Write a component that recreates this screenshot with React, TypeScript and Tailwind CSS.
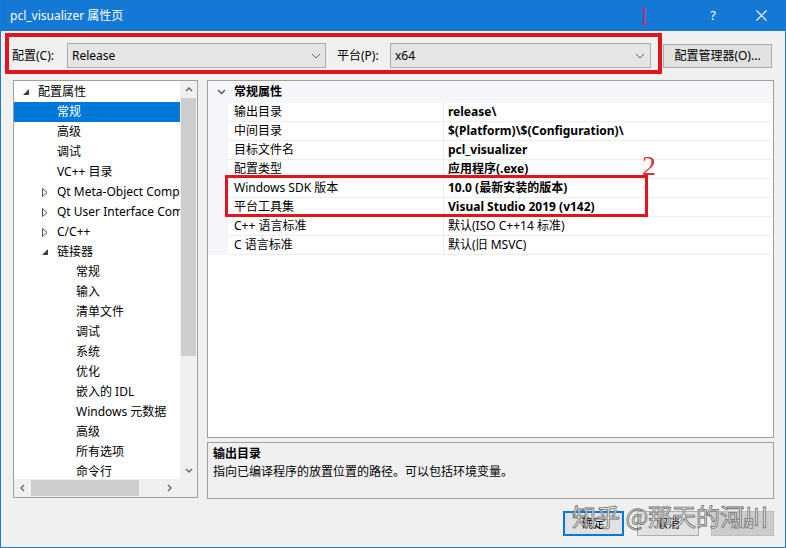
import React from "react";

type TreeRow = {
  text: string;
  level: 0 | 1 | 2;
  icon?: "open" | "closed";
  selected?: boolean;
};

const treeRows: TreeRow[] = [
  { text: "配置属性", level: 0, icon: "open" },
  { text: "常规", level: 1, selected: true },
  { text: "高级", level: 1 },
  { text: "调试", level: 1 },
  { text: "VC++ 目录", level: 1 },
  { text: "Qt Meta-Object Compiler", level: 1, icon: "closed" },
  { text: "Qt User Interface Compiler", level: 1, icon: "closed" },
  { text: "C/C++", level: 1, icon: "closed" },
  { text: "链接器", level: 1, icon: "open" },
  { text: "常规", level: 2 },
  { text: "输入", level: 2 },
  { text: "清单文件", level: 2 },
  { text: "调试", level: 2 },
  { text: "系统", level: 2 },
  { text: "优化", level: 2 },
  { text: "嵌入的 IDL", level: 2 },
  { text: "Windows 元数据", level: 2 },
  { text: "高级", level: 2 },
  { text: "所有选项", level: 2 },
  { text: "命令行", level: 2 },
];

const props: { name: string; value: string; bold: boolean }[] = [
  { name: "输出目录", value: "release\\", bold: true },
  { name: "中间目录", value: "$(Platform)\\$(Configuration)\\", bold: true },
  { name: "目标文件名", value: "pcl_visualizer", bold: true },
  { name: "配置类型", value: "应用程序(.exe)", bold: true },
  { name: "Windows SDK 版本", value: "10.0 (最新安装的版本)", bold: true },
  { name: "平台工具集", value: "Visual Studio 2019 (v142)", bold: true },
  { name: "C++ 语言标准", value: "默认(ISO C++14 标准)", bold: false },
  { name: "C 语言标准", value: "默认(旧 MSVC)", bold: false },
];

const levelPad = ["pl-[5px]", "pl-[24px]", "pl-[43px]"];

const Chevron = ({ dir }: { dir: "up" | "down" | "left" | "right" }) => {
  const pts = {
    up: "1,5 4,2 7,5",
    down: "1,2 4,5 7,2",
    left: "5,1 2,4 5,7",
    right: "2,1 5,4 2,7",
  }[dir];
  return (
    <svg width="8" height="8" viewBox="0 0 8 8">
      <polyline points={pts} fill="none" stroke="#606060" strokeWidth="1.3" />
    </svg>
  );
};

const DropArrow = () => (
  <svg width="10" height="6" viewBox="0 0 10 6">
    <polyline points="1,1 5,5 9,1" fill="none" stroke="#5a5a5a" strokeWidth="1" />
  </svg>
);

const App = () => {
  return (
    <div className="relative w-[786px] h-[548px] bg-[#f0f0f0] border-x border-b border-[#1a7bd6] flex flex-col font-['Noto_Sans','Noto_Sans_CJK_SC',sans-serif] text-[12px] text-black overflow-hidden">
      {/* title bar */}
      <div className="h-[31px] -mx-px bg-[#1479d4] flex items-center text-white shrink-0">
        <span className="ml-[10px] text-[12px]">pcl_visualizer 属性页</span>
        <span className="ml-auto text-[13px] mr-[40px]">?</span>
        <svg width="11" height="11" viewBox="0 0 11 11" className="mr-[19px]">
          <path d="M0.5 0.5 L10.5 10.5 M10.5 0.5 L0.5 10.5" stroke="white" strokeWidth="1.1" />
        </svg>
      </div>

      {/* toolbar */}
      <div className="mt-[12px] h-[25px] flex items-center pl-[11px] shrink-0">
        <span className="w-[55px]">配置(C):</span>
        <div className="w-[259px] h-[25px] bg-[#e5e5e5] border border-[#adadad] flex items-center pl-[4px] pr-[4px]">
          <span>Release</span>
          <span className="ml-auto">
            <DropArrow />
          </span>
        </div>
        <span className="ml-[11px] w-[53px]">平台(P):</span>
        <div className="w-[261px] h-[25px] bg-[#e5e5e5] border border-[#adadad] flex items-center pl-[4px] pr-[5px]">
          <span>x64</span>
          <span className="ml-auto">
            <DropArrow />
          </span>
        </div>
        <div className="ml-[12px] w-[109px] h-[24px] bg-[#e1e1e1] border border-[#adadad] flex items-center justify-center">
          配置管理器(O)...
        </div>
      </div>

      {/* main */}
      <div className="mt-[12px] flex shrink-0">
        {/* tree */}
        <div className="ml-[12px] w-[185px] h-[418px] border border-[#a0a0a0] bg-white flex flex-col">
          <div className="flex h-[398px]">
            <div className="w-[166px] overflow-hidden pt-px">
              {treeRows.map((r, i) => (
                <div
                  key={i}
                  className={`h-[20px] flex items-center whitespace-nowrap ${levelPad[r.level]} ${
                    r.selected ? "bg-[#0078d7] text-white" : ""
                  }`}
                >
                  <span className="w-[19px] h-[20px] flex items-center pl-[4px] shrink-0">
                    {r.icon === "open" && (
                      <svg width="6" height="6" viewBox="0 0 6 6">
                        <polygon points="6,0 6,6 0,6" fill="#404040" />
                      </svg>
                    )}
                    {r.icon === "closed" && (
                      <svg width="6" height="9" viewBox="0 0 6 9">
                        <polygon points="0.5,0.5 5,4.5 0.5,8.5" fill="none" stroke="#505050" strokeWidth="1" />
                      </svg>
                    )}
                  </span>
                  <span>{r.text}</span>
                </div>
              ))}
            </div>
            <div className="w-[17px] bg-[#f0f0f0] flex flex-col items-center">
              <div className="h-[17px] flex items-center justify-center">
                <Chevron dir="up" />
              </div>
              <div className="w-[15px] h-[258px] bg-[#cdcdcd]" />
              <div className="mt-auto h-[17px] flex items-center justify-center">
                <Chevron dir="down" />
              </div>
            </div>
          </div>
          <div className="flex h-[18px]">
            <div className="w-[166px] bg-[#f0f0f0] flex items-center">
              <div className="w-[17px] flex items-center justify-center">
                <Chevron dir="left" />
              </div>
              <div className="w-[108px] h-[16px] bg-[#cdcdcd]" />
              <div className="ml-auto w-[17px] flex items-center justify-center mr-[2px]">
                <Chevron dir="right" />
              </div>
            </div>
            <div className="w-[17px] bg-[#f0f0f0]" />
          </div>
        </div>

        {/* right column */}
        <div className="ml-[9px] w-[567px] flex flex-col">
          <div className="h-[358px] border border-[#a0a0a0] bg-white">
            <div className="h-[22px] bg-[#f4f6f9] flex items-center">
              <span className="w-[26px] flex justify-center pl-[1px]">
                <svg width="9" height="6" viewBox="0 0 9 6">
                  <polyline points="1,1 4.5,4.5 8,1" fill="none" stroke="#505050" strokeWidth="1.3" />
                </svg>
              </span>
              <span className="font-bold">常规属性</span>
            </div>
            {props.map((p) => (
              <div key={p.name} className="h-[19px] flex">
                <div className="w-[20px] bg-[#f4f6f9]" />
                <div className="w-[215px] border-b border-[#ededed] pl-[6px] flex items-center whitespace-nowrap">
                  {p.name}
                </div>
                <div
                  className={`flex-1 border-b border-l border-[#ededed] pl-[4px] flex items-center whitespace-nowrap ${
                    p.bold ? "font-bold" : ""
                  }`}
                >
                  {p.value}
                </div>
              </div>
            ))}
          </div>
          <div className="mt-[4px] h-[57px] border border-[#a0a0a0] bg-[#f0f0f0] px-[5px] pt-[2px] leading-[18px]">
            <div className="font-bold">输出目录</div>
            <div>指向已编译程序的放置位置的路径。可以包括环境变量。</div>
          </div>
        </div>
      </div>

      {/* buttons */}
      <div className="mt-[12px] flex shrink-0 pl-[562px]">
        <div className="w-[61px] h-[25px] bg-[#e1e1e1] border-2 border-[#0078d7] flex items-center justify-center">
          确定
        </div>
        <div className="ml-[13px] w-[62px] h-[25px] bg-[#e1e1e1] border border-[#adadad] flex items-center justify-center">
          取消
        </div>
        <div className="ml-[12px] w-[63px] h-[25px] bg-[#cccccc] border border-[#bfbfbf] text-[#838383] flex items-center justify-center">
          应用
        </div>
      </div>

      {/* annotations */}
      <div className="absolute left-[4px] top-[33px] w-[657px] h-[41px] border-[4px] border-[#e0161f]" />
      <div className="absolute left-[224px] top-[175px] w-[423px] h-[42px] border-[3px] border-[#e0161f]" />
      <span className="absolute left-[636px] top-[0px] text-[28px] leading-[32px] text-[#c23374] font-['Liberation_Serif',serif] scale-x-75">
        1
      </span>
      <span className="absolute left-[641px] top-[150px] text-[28px] leading-[32px] text-[#d0343c] font-['Liberation_Serif',serif]">
        2
      </span>
      <span className="absolute left-[571px] top-[500px] text-[24px] leading-[32px] whitespace-nowrap text-white/90 font-['Noto_Sans_CJK_SC',sans-serif] [-webkit-text-stroke:0.8px_#6a6a6a]">
        知乎 @那天的河川
      </span>
    </div>
  );
};

export default App;
